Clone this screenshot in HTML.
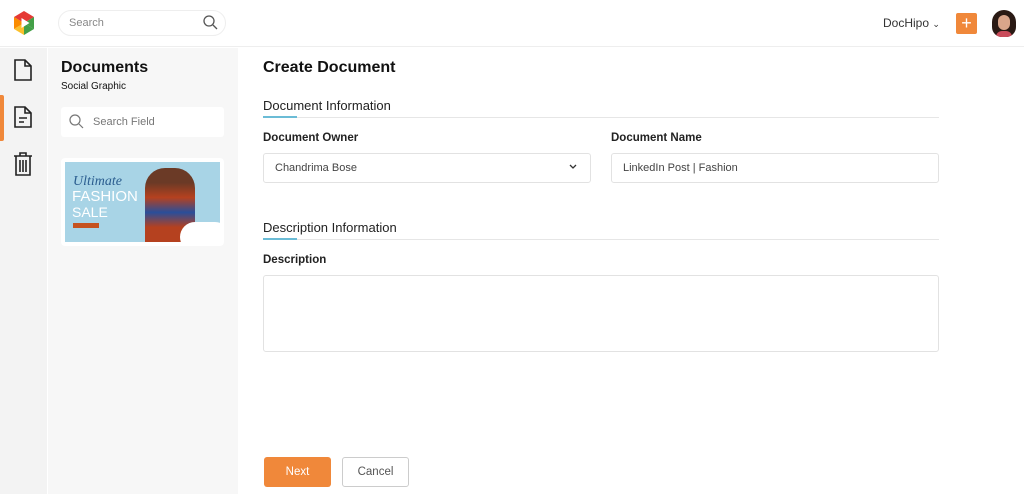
<!DOCTYPE html>
<html><head><style>
*{box-sizing:border-box;margin:0;padding:0}
body{width:1024px;height:494px;overflow:hidden;background:#fff;font-family:"Liberation Sans",sans-serif;color:#111;position:relative}
.a{position:absolute}
.top{left:0;top:0;width:1024px;height:47px;background:#fff;border-bottom:1px solid #eee}
.inp{border:1px solid #e2e2e2;border-radius:3px;background:#fff;font-size:11px;color:#444;padding-left:11px;display:flex;align-items:center}
.lbl{font-size:11.5px;font-weight:bold;color:#222}
.sec{font-size:13px;color:#222}
.line{height:1px;background:#e6e6e6}
.ul{height:2px;width:34px;background:#6bbcd6}
</style></head><body>
<div class="a top"></div>
<svg class="a" style="left:11px;top:10px" width="26" height="26" viewBox="0 0 26 26">
<path d="M13 1 L23 7 L13 13Z" fill="#e53935"/><path d="M23 7 L23 19 L13 13Z" fill="#43a047"/><path d="M23 19 L13 25 L13 13Z" fill="#43a047"/><path d="M13 25 L3 19 L13 13Z" fill="#fbc02d"/><path d="M3 19 L3 7 L13 13Z" fill="#fb8c00"/><path d="M3 7 L13 1 L13 13Z" fill="#e53935"/>
<path d="M10.5 8 L18.5 13 L10.5 18Z" fill="#fff"/></svg>
<div class="a" style="left:58px;top:10px;width:168px;height:26px;border:1px solid #eee;border-radius:13px;font-size:11px;color:#888;padding:6px 10px">Search</div>
<svg class="a" style="left:203px;top:15px" width="15" height="15" viewBox="0 0 15 15"><circle cx="6" cy="6" r="5" fill="none" stroke="#555" stroke-width="1.3"/><path d="M10 10 L14 14" stroke="#555" stroke-width="1.3"/></svg>
<div class="a" style="left:883px;top:16px;font-size:12px;color:#333">DocHipo <span style="font-size:9px">&#8964;</span></div>
<div class="a" style="left:956px;top:13px;width:21px;height:21px;background:#f0883a;border-radius:2px;color:#fff;font-size:18px;line-height:20px;text-align:center">+</div>
<div class="a" style="left:992px;top:10px;width:24px;height:27px;border-radius:12px 12px 10px 10px;background:#2a1a14;overflow:hidden"><div style="position:absolute;left:6px;top:5px;width:12px;height:15px;border-radius:6px;background:#d9a58a"></div><div style="position:absolute;left:4px;top:21px;width:16px;height:8px;border-radius:6px 6px 0 0;background:#c94b5a"></div></div>
<div class="a" style="left:0;top:48px;width:47px;height:446px;background:#f3f3f3"></div>
<div class="a" style="left:0;top:95px;width:4px;height:46px;background:#f0883a;border-radius:0 2px 2px 0"></div>
<svg class="a" style="left:13px;top:59px" width="20" height="22" viewBox="0 0 20 22"><path d="M2 1 H12 L18 7 V21 H2Z M12 1 V7 H18" fill="none" stroke="#222" stroke-width="1.6"/></svg>
<svg class="a" style="left:13px;top:106px" width="20" height="22" viewBox="0 0 20 22"><path d="M2 1 H12 L18 7 V21 H2Z M12 1 V7 H18 M6 12 H14 M6 16 H11" fill="none" stroke="#222" stroke-width="1.6"/></svg>
<svg class="a" style="left:13px;top:152px" width="20" height="24" viewBox="0 0 20 24"><path d="M1 4 H19 M7 4 V1 H13 V4 M3 4 V23 H17 V4 M7 8 V20 M10 8 V20 M13 8 V20" fill="none" stroke="#222" stroke-width="1.6"/></svg>
<div class="a" style="left:48px;top:48px;width:190px;height:446px;background:#f7f7f7"></div>
<div class="a" style="left:61px;top:59px;font-size:16px;font-weight:bold">Documents</div>
<div class="a" style="left:61px;top:81px;font-size:10px">Social Graphic</div>
<div class="a" style="left:61px;top:107px;width:163px;height:30px;background:#fff;border-radius:3px;font-size:11px;color:#777;padding:9px 0 0 32px">Search Field</div>
<svg class="a" style="left:69px;top:114px" width="15" height="15" viewBox="0 0 15 15"><circle cx="6" cy="6" r="5" fill="none" stroke="#777" stroke-width="1.2"/><path d="M10 10 L14 14" stroke="#777" stroke-width="1.2"/></svg>
<div class="a" style="left:61px;top:158px;width:163px;height:88px;background:#fff;border-radius:4px;padding:4px">
<div style="position:relative;width:155px;height:80px;background:#a8d4e6;overflow:hidden">
<div class="a" style="left:8px;top:12px;font-family:'Liberation Serif',serif;font-style:italic;font-size:14px;color:#2a5d8f">Ultimate</div>
<div class="a" style="left:7px;top:26px;font-size:15px;color:#fff;letter-spacing:0">FASHION</div>
<div class="a" style="left:7px;top:42px;font-size:14px;color:#fff">SALE</div>
<div class="a" style="left:8px;top:61px;width:26px;height:5px;background:#c5521f"></div>
<div class="a" style="left:80px;top:6px;width:50px;height:74px;background:linear-gradient(#6b3a26 20%,#b5411f 40%,#2a4e9a 60%,#b5411f 80%);border-radius:20px 20px 0 0"></div>
<div class="a" style="left:115px;top:60px;width:50px;height:30px;background:#fff;border-radius:20px"></div>
</div></div>
<div class="a" style="left:263px;top:59px;font-size:16px;font-weight:bold">Create Document</div>
<div class="a sec" style="left:263px;top:98px">Document Information</div>
<div class="a line" style="left:263px;top:117px;width:676px"></div>
<div class="a ul" style="left:263px;top:116px"></div>
<div class="a lbl" style="left:263px;top:132px">Document Owner</div>
<div class="a inp" style="left:263px;top:153px;width:328px;height:30px">Chandrima Bose</div>
<svg class="a" style="left:569px;top:164px" width="8" height="6" viewBox="0 0 8 6"><path d="M1 1 L4 4 L7 1" fill="none" stroke="#333" stroke-width="1.3"/></svg>
<div class="a lbl" style="left:611px;top:132px">Document Name</div>
<div class="a inp" style="left:611px;top:153px;width:328px;height:30px">LinkedIn Post | Fashion</div>
<div class="a sec" style="left:263px;top:220px">Description Information</div>
<div class="a line" style="left:263px;top:239px;width:676px"></div>
<div class="a ul" style="left:263px;top:238px"></div>
<div class="a lbl" style="left:263px;top:254px">Description</div>
<div class="a inp" style="left:263px;top:275px;width:676px;height:77px"></div>
<div class="a" style="left:264px;top:457px;width:67px;height:30px;background:#f0883a;border-radius:3px;color:#fff;font-size:11.5px;text-align:center;line-height:30px">Next</div>
<div class="a" style="left:342px;top:457px;width:67px;height:30px;border:1px solid #ccc;border-radius:3px;color:#555;font-size:11.5px;text-align:center;line-height:28px">Cancel</div>
</body></html>
